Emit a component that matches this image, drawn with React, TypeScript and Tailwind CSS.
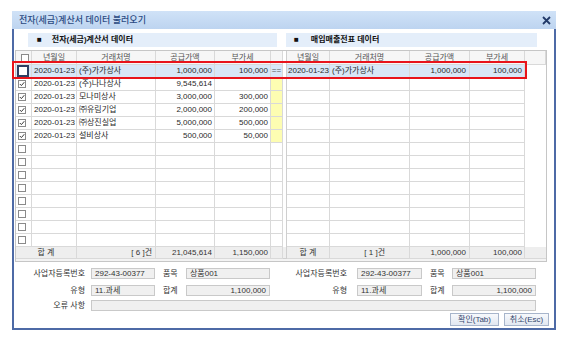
import React from 'react';

type Row = { d: string; n: string; a: string; v: string };

const leftRows: Row[] = [
  { d: '2020-01-23', n: '(주)가가상사', a: '1,000,000', v: '100,000' },
  { d: '2020-01-23', n: '(주)나나상사', a: '9,545,614', v: '' },
  { d: '2020-01-23', n: '모나미상사', a: '3,000,000', v: '300,000' },
  { d: '2020-01-23', n: '㈜유림기업', a: '2,000,000', v: '200,000' },
  { d: '2020-01-23', n: '㈜상진실업', a: '5,000,000', v: '500,000' },
  { d: '2020-01-23', n: '설비상사', a: '500,000', v: '50,000' },
];

const line = 'border-r border-b border-[#d9d9d9]';

const CheckBox = ({ on }: { on: boolean }) => (
  <span className="w-[8px] h-[8px] border border-[#8a8a8a] bg-white flex items-center justify-center">
    {on && (
      <svg width="6" height="6" viewBox="0 0 6 6">
        <polyline points="0.8,3 2.4,4.6 5.3,1.2" fill="none" stroke="#3a3a3a" strokeWidth="1" />
      </svg>
    )}
  </span>
);

const FocusBox = () => (
  <span className="w-[12px] h-[12px] border-[2.5px] border-[#2e3f63] bg-white" />
);

const DataRow = ({ i }: { i: number }) => {
  const r = leftRows[i];
  const sel = i === 0;
  const bg = sel ? 'bg-[#d8e7f7]' : 'bg-white';
  const yellow = i > 0 && i < 6;
  return (
    <div className="flex h-[13px] text-[#2a2a2a]">
      <div className={`w-[16px] ${line} ${bg} flex items-center ${sel ? 'pl-[1px]' : 'pl-[2px]'}`}>
        {sel ? <FocusBox /> : <CheckBox on={!!r} />}
      </div>
      <div className={`w-[45px] ${line} ${bg} flex items-center pl-[2px]`}>{r?.d}</div>
      <div className={`w-[79px] ${line} ${bg} flex items-center pl-[2px]`}>{r?.n}</div>
      <div className={`w-[59px] ${line} ${bg} flex items-center justify-end pr-[2px]`}>{r?.a}</div>
      <div className={`w-[56px] ${line} ${bg} flex items-center justify-end pr-[2px]`}>{r?.v}</div>
      <div className={`w-[12px] ${line} ${sel ? 'bg-[#d8e7f7]' : yellow ? 'bg-[#fdfdb2]' : 'bg-white'} flex items-center justify-center text-[#555]`}>
        {sel ? '==' : ''}
      </div>
      <div className="w-[4px] border-r border-[#cfcfcf]" />
      <div className={`w-[43px] ${line} ${bg} flex items-center pl-[1px]`}>{sel ? '2020-01-23' : ''}</div>
      <div className={`w-[80px] ${line} ${bg} flex items-center pl-[2px]`}>{sel ? '(주)가가상사' : ''}</div>
      <div className={`w-[60px] ${line} ${bg} flex items-center justify-end pr-[3px]`}>{sel ? '1,000,000' : ''}</div>
      <div className={`w-[55px] ${line} ${bg} flex items-center justify-end pr-[2px]`}>{sel ? '100,000' : ''}</div>
      <div className="w-[21px]" />
    </div>
  );
};

const HeadCell = ({ w, children }: { w: string; children?: React.ReactNode }) => (
  <div className={`${w} ${line} bg-[#f6f6f6] flex items-center justify-center text-[#555]`}>{children}</div>
);

const Field = ({ w, children, right }: { w: string; children?: React.ReactNode; right?: boolean }) => (
  <div
    className={`${w} h-[11px] border border-[#c9c9c9] bg-[#f0f0f0] flex items-center px-[3px] text-[#333] ${
      right ? 'justify-end' : ''
    }`}
  >
    {children}
  </div>
);

export default function App() {
  return (
    <div className="relative w-[575px] h-[352px] bg-white overflow-hidden whitespace-nowrap font-['Liberation_Sans','Noto_Sans_CJK_KR',sans-serif] text-[8px] leading-none">
      <div className="ml-[12px] mt-[11px] w-[544px] h-[319px] flex flex-col">
        {/* title bar */}
        <div className="h-[18px] bg-gradient-to-b from-[#d0e2f7] to-[#bdd4f0] flex items-center justify-between pl-[7px] pr-[5px]">
          <span className="text-[9px] font-medium text-[#2b4a82]">전자(세금)계산서 데이터 불러오기</span>
          <svg width="9" height="9" viewBox="0 0 9 9">
            <path d="M1 1 L8 8 M8 1 L1 8" stroke="#223a69" strokeWidth="1.8" />
          </svg>
        </div>

        <div className="flex-1 border-x-2 border-b-2 border-[#4d6aa6] bg-white flex flex-col">
          {/* section headers */}
          <div className="flex mt-[4px] ml-[14px] gap-[9px]">
            <div className="w-[249px] h-[14px] bg-[#e4eefa] flex items-center pl-[9px] font-bold text-[#111]">
              <span className="mr-[10px]">■</span>전자(세금)계산서 데이터
            </div>
            <div className="w-[251px] h-[14px] bg-[#e4eefa] flex items-center pl-[8px] font-bold text-[#111]">
              <span className="mr-[12px]">■</span>매입매출전표 데이터
            </div>
          </div>

          {/* tables */}
          <div className="mt-[3px] ml-[1px] w-[532px] h-[212px] border border-[#c6c6c6] flex flex-col">
            <div className="flex h-[14px]">
              <div className={`w-[16px] ${line} bg-[#f6f6f6] flex items-center pl-[5px]`}>
                <CheckBox on={false} />
              </div>
              <HeadCell w="w-[45px]">년월일</HeadCell>
              <HeadCell w="w-[79px]">거래처명</HeadCell>
              <HeadCell w="w-[59px]">공급가액</HeadCell>
              <HeadCell w="w-[56px]">부가세</HeadCell>
              <HeadCell w="w-[12px]" />
              <div className="w-[4px] border-r border-[#cfcfcf]" />
              <HeadCell w="w-[43px]">년월일</HeadCell>
              <HeadCell w="w-[80px]">거래처명</HeadCell>
              <HeadCell w="w-[60px]">공급가액</HeadCell>
              <HeadCell w="w-[55px]">부가세</HeadCell>
              <HeadCell w="w-[21px]" />
            </div>
            {Array.from({ length: 14 }, (_, i) => (
              <DataRow key={i} i={i} />
            ))}
            <div className="flex h-[12px] bg-[#eeeeee] text-[#333]">
              <div className={`w-[61px] ${line} flex items-center justify-center`}>합 계</div>
              <div className={`w-[79px] ${line} flex items-center justify-end pr-[3px]`}>[ 6 ]건</div>
              <div className={`w-[59px] ${line} flex items-center justify-end pr-[2px]`}>21,045,614</div>
              <div className={`w-[56px] ${line} flex items-center justify-end pr-[2px]`}>1,150,000</div>
              <div className={`w-[12px] ${line}`} />
              <div className="w-[4px] border-r border-b border-[#cfcfcf]" />
              <div className={`w-[43px] ${line} flex items-center justify-center`}>합 계</div>
              <div className={`w-[80px] ${line} flex items-center justify-end pr-[24px]`}>[ 1 ]건</div>
              <div className={`w-[60px] ${line} flex items-center justify-end pr-[3px]`}>1,000,000</div>
              <div className={`w-[55px] ${line} flex items-center justify-end pr-[2px]`}>100,000</div>
              <div className="w-[21px] border-b border-[#d9d9d9]" />
            </div>
            <div className="flex-1 bg-[#f3f3f3]" />
          </div>

          {/* form */}
          <div className="flex items-center mt-[6px] text-[#333]">
            <div className="w-[71px] text-right">사업자등록번호</div>
            <div className="ml-[6px]"><Field w="w-[64px]">292-43-00377</Field></div>
            <div className="ml-[8px] w-[16px]">품목</div>
            <div className="ml-[7px]"><Field w="w-[84px]">상품001</Field></div>
            <div className="w-[77px] text-right">사업자등록번호</div>
            <div className="ml-[10px]"><Field w="w-[65px]">292-43-00377</Field></div>
            <div className="ml-[8px] w-[16px]">품목</div>
            <div className="ml-[6px]"><Field w="w-[84px]">상품001</Field></div>
          </div>
          <div className="flex items-center mt-[6px] text-[#333]">
            <div className="w-[71px] text-right">유형</div>
            <div className="ml-[6px]"><Field w="w-[64px]">11.과세</Field></div>
            <div className="ml-[8px] w-[16px]">합계</div>
            <div className="ml-[7px]"><Field w="w-[84px]" right>1,100,000</Field></div>
            <div className="w-[77px] text-right">유형</div>
            <div className="ml-[10px]"><Field w="w-[65px]">11.과세</Field></div>
            <div className="ml-[8px] w-[16px]">합계</div>
            <div className="ml-[6px]"><Field w="w-[84px]" right>1,100,000</Field></div>
          </div>
          <div className="flex items-center mt-[4px] text-[#333]">
            <div className="w-[71px] text-right">오류 사항</div>
            <div className="ml-[6px]"><Field w="w-[445px]" /></div>
          </div>
          <div className="flex justify-end gap-[5px] mt-[2px] mr-[5px]">
            <button className="w-[49px] h-[13px] border border-[#a7b5cb] bg-gradient-to-b from-[#f7f9fc] to-[#e2e8f1] text-[#34486e] text-[8px] leading-none">
              확인(Tab)
            </button>
            <button className="w-[45px] h-[13px] border border-[#a7b5cb] bg-gradient-to-b from-[#f7f9fc] to-[#e2e8f1] text-[#34486e] text-[8px] leading-none">
              취소(Esc)
            </button>
          </div>
        </div>
      </div>

      {/* selection highlight */}
      <div className="absolute left-[12px] top-[61px] w-[515px] h-[18px] border-2 border-[#e8141b]" />
    </div>
  );
}
